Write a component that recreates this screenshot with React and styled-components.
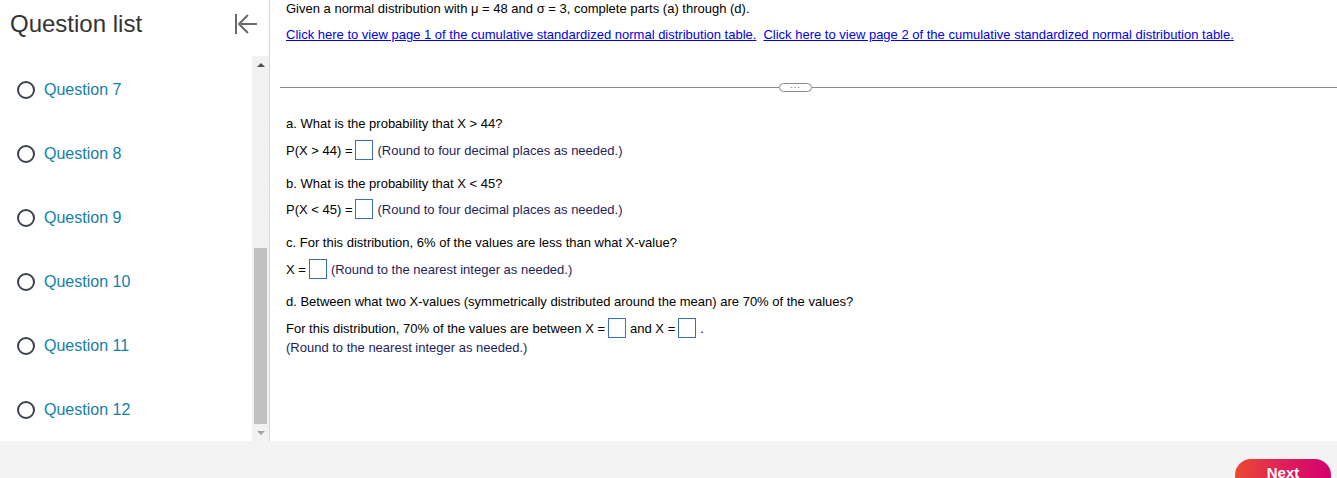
import React from "react";
import styled, { createGlobalStyle } from "styled-components";

const GlobalStyle = createGlobalStyle`
  html, body {
    margin: 0;
    padding: 0;
    background: #fff;
    overflow: hidden;
  }
  body {
    font-family: "Liberation Sans", Arial, sans-serif;
  }
`;

const Page = styled.div`
  display: flex;
  flex-direction: column;
  height: 478px;
  width: 1337px;
`;

const Body = styled.div`
  display: flex;
  flex: 1;
  min-height: 0;
`;

const Sidebar = styled.aside`
  display: flex;
  flex-direction: column;
  width: 269px;
  border-right: 1px solid #d6d6e2;
`;

const SidebarHeader = styled.div`
  align-items: center;
  display: flex;
  height: 48px;
  justify-content: space-between;
  padding: 0 10px 8px 10px;
`;

const Title = styled.h2`
  color: #333;
  font-size: 24px;
  font-weight: 400;
  margin: 0;
`;

const CollapseButton = styled.button`
  background: none;
  border: 0;
  display: flex;
  margin: 0;
  padding: 0;
`;

const ListArea = styled.div`
  display: flex;
  flex: 1;
  min-height: 0;
`;

const List = styled.ul`
  flex: 1;
  list-style: none;
  margin: 0;
  padding: 2px 0 0 0;
`;

const Item = styled.li`
  align-items: center;
  display: flex;
  gap: 9px;
  height: 64px;
  padding-left: 17px;
`;

const Radio = styled.span`
  border: 2px solid #3a4450;
  border-radius: 50%;
  box-sizing: border-box;
  height: 18px;
  width: 18px;
`;

const ItemLabel = styled.span`
  color: #1380a8;
  font-size: 16px;
`;

const Scrollbar = styled.div`
  background: #f1f1f1;
  display: flex;
  flex-direction: column;
  width: 17px;
`;

const Arrow = styled.div`
  align-items: center;
  display: flex;
  height: 17px;
  justify-content: center;

  &::after {
    border-left: 4px solid transparent;
    border-right: 4px solid transparent;
    ${({ $down }) =>
      $down
        ? "border-top: 4px solid #a3a3a3;"
        : "border-bottom: 4px solid #505050;"}
    content: "";
  }
`;

const Track = styled.div`
  display: flex;
  flex: 1;
  flex-direction: column;
  justify-content: flex-end;
  padding: 0 2px;
`;

const Thumb = styled.div`
  background: #c1c1c1;
  height: 176px;
`;

const Main = styled.main`
  flex: 1;
  padding: 1px 0 0 10px;
`;

const Intro = styled.div`
  color: #000;
  font-size: 13px;
  line-height: 16px;
  padding-left: 6px;
`;

const LinkRow = styled.div`
  display: flex;
  gap: 7px;
  margin-top: 10px;
`;

const TableLink = styled.a`
  color: #0000ee;
  cursor: pointer;
  text-decoration: underline;
`;

const Divider = styled.div`
  align-items: center;
  display: flex;
  height: 9px;
  margin-top: 40px;
`;

const Rule = styled.div`
  background: #8c8c8c;
  height: 1px;
  width: ${({ $w }) => ($w ? `${$w}px` : "auto")};
  flex: ${({ $w }) => ($w ? "none" : "1")};
`;

const MorePill = styled.div`
  align-items: center;
  background: #fff;
  border: 1px solid #8c8c8c;
  border-radius: 5px;
  box-sizing: border-box;
  color: #555;
  display: flex;
  font-size: 9px;
  height: 9px;
  justify-content: center;
  letter-spacing: 1px;
  line-height: 1;
  padding-bottom: 4px;
  width: 33px;
`;

const Questions = styled.div`
  color: #000;
  font-size: 13px;
  padding: 21px 0 0 6px;
`;

const Line = styled.div`
  align-items: center;
  display: flex;
  height: 20px;
  margin-top: ${({ $gap }) => $gap || 0}px;
`;

const Muted = styled.span`
  color: #1e1e5a;
  margin-left: ${({ $ml }) => $ml || 0}px;
`;

const AnswerBox = styled.span`
  border: 1px solid #3a6fc4;
  box-sizing: border-box;
  display: inline-block;
  height: 20px;
  margin: 0 4px 0 3px;
  width: 18px;
`;

const Footer = styled.footer`
  background: #f3f3f3;
  display: flex;
  height: 37px;
  justify-content: flex-end;
  padding-right: 6px;
`;

const NextButton = styled.button`
  background: linear-gradient(90deg, #ea4a32 0%, #e0205a 50%, #d3006e 100%);
  border: 0;
  border-radius: 16px;
  color: #fff;
  font-family: "Liberation Sans", Arial, sans-serif;
  font-size: 15px;
  font-weight: 700;
  height: 32px;
  margin-top: 18px;
  padding: 5px 0 0 0;
  align-self: flex-start;
  width: 96px;
  display: flex;
  justify-content: center;
  align-items: flex-start;
`;

const CollapseIcon = () => (
  <svg width="26" height="24" viewBox="0 0 26 24" fill="none">
    <path d="M3 2v20" stroke="#6a6a6a" strokeWidth="2" />
    <path d="M24 12H8M15 3l-9 9 9 9" stroke="#6a6a6a" strokeWidth="2" />
  </svg>
);

const questions = [7, 8, 9, 10, 11, 12];

export default function App() {
  return (
    <Page>
      <GlobalStyle />
      <Body>
        <Sidebar>
          <SidebarHeader>
            <Title>Question list</Title>
            <CollapseButton>
              <CollapseIcon />
            </CollapseButton>
          </SidebarHeader>
          <ListArea>
            <List>
              {questions.map((n) => (
                <Item key={n}>
                  <Radio />
                  <ItemLabel>Question {n}</ItemLabel>
                </Item>
              ))}
            </List>
            <Scrollbar>
              <Arrow />
              <Track>
                <Thumb />
              </Track>
              <Arrow $down />
            </Scrollbar>
          </ListArea>
        </Sidebar>
        <Main>
          <Intro>
            <div>
              Given a normal distribution with μ = 48 and σ = 3, complete parts
              (a) through (d).
            </div>
            <LinkRow>
              <TableLink>
                Click here to view page 1 of the cumulative standardized normal
                distribution table.
              </TableLink>
              <TableLink>
                Click here to view page 2 of the cumulative standardized normal
                distribution table.
              </TableLink>
            </LinkRow>
          </Intro>
          <Divider>
            <Rule $w={499} />
            <MorePill>...</MorePill>
            <Rule />
          </Divider>
          <Questions>
            <Line>a. What is the probability that X &gt; 44?</Line>
            <Line $gap={7}>
              P(X &gt; 44) =<AnswerBox />
              <Muted>(Round to four decimal places as needed.)</Muted>
            </Line>
            <Line $gap={13}>b. What is the probability that X &lt; 45?</Line>
            <Line $gap={6}>
              P(X &lt; 45) =<AnswerBox />
              <Muted>(Round to four decimal places as needed.)</Muted>
            </Line>
            <Line $gap={13}>
              c. For this distribution, 6% of the values are less than what
              X-value?
            </Line>
            <Line $gap={7}>
              X =<AnswerBox />
              <Muted>(Round to the nearest integer as needed.)</Muted>
            </Line>
            <Line $gap={12}>
              d. Between what two X-values (symmetrically distributed around the
              mean) are 70% of the values?
            </Line>
            <Line $gap={7}>
              For this distribution, 70% of the values are between X =
              <AnswerBox />
              and X =<AnswerBox />.
            </Line>
            <Line $gap={-1}>
              <Muted>(Round to the nearest integer as needed.)</Muted>
            </Line>
          </Questions>
        </Main>
      </Body>
      <Footer>
        <NextButton>Next</NextButton>
      </Footer>
    </Page>
  );
}
